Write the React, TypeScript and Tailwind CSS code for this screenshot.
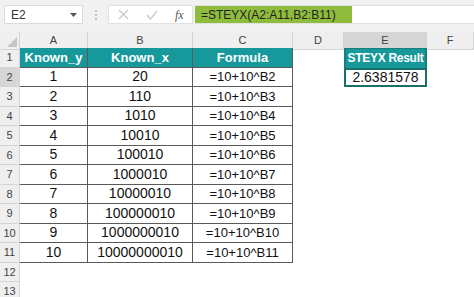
import React from 'react';

const rows = [
  ['1', '20', '=10+10^B2'],
  ['2', '110', '=10+10^B3'],
  ['3', '1010', '=10+10^B4'],
  ['4', '10010', '=10+10^B5'],
  ['5', '100010', '=10+10^B6'],
  ['6', '1000010', '=10+10^B7'],
  ['7', '10000010', '=10+10^B8'],
  ['8', '100000010', '=10+10^B9'],
  ['9', '1000000010', '=10+10^B10'],
  ['10', '10000000010', '=10+10^B11'],
];

const cols = ['A', 'B', 'C', 'D', 'E', 'F'];
const gridCols = 'grid grid-cols-[20px_68px_105px_100px_51px_83px_47px]';

const RowHead = ({ n, active }: { n: number; active?: boolean }) => (
  <div
    className={`flex items-center justify-center border-b border-r border-[#d4d4d4] text-[11px] text-[#444] ${
      active ? 'bg-[#d6d6d6]' : 'bg-[#efefef]'
    }`}
  >
    {n}
  </div>
);

export default function App() {
  return (
    <div className="w-[474px] h-[297px] overflow-hidden bg-white font-['Liberation_Sans',Arial,sans-serif] text-[#111]">
      {/* Formula bar */}
      <div className="h-[32px] bg-[#f1f1f1] flex items-start pt-[5px] pl-[4px]">
        <div className="w-[79px] h-[19px] bg-white border border-[#dadada] flex items-center justify-between pl-[6px] pr-[5px] text-[12px] text-[#333]">
          <span>E2</span>
          <svg width="7" height="4" viewBox="0 0 7 4"><path d="M0 0h7L3.5 4z" fill="#555" /></svg>
        </div>
        <div className="w-[25px] h-[19px] flex flex-col items-center justify-center gap-[2px]">
          <span className="w-[2px] h-[2px] bg-[#c4c4c4]" />
          <span className="w-[2px] h-[2px] bg-[#c4c4c4]" />
          <span className="w-[2px] h-[2px] bg-[#c4c4c4]" />
        </div>
        <div className="w-[85px] h-[19px] bg-white border border-[#e2e2e2] flex items-center pl-[9px] gap-[17px]">
          <svg width="11" height="11" viewBox="0 0 11 11"><path d="M1 1l9 9M10 1l-9 9" stroke="#c8c8c8" strokeWidth="1.2" /></svg>
          <svg width="12" height="10" viewBox="0 0 12 10"><path d="M1 5l3.5 4L11 1" stroke="#c8c8c8" strokeWidth="1.2" fill="none" /></svg>
          <span className="font-['Liberation_Serif',serif] italic text-[12px] text-[#555]">fx</span>
        </div>
        <div className="flex-1 h-[19px] ml-[2px] bg-white border-y border-[#e2e2e2] flex">
          <div className="w-[157px] h-full bg-[#8fbc3c] flex items-center pl-[6px] text-[12px] text-[#222]">
            =STEYX(A2:A11,B2:B11)
          </div>
        </div>
      </div>

      {/* Column headers */}
      <div className={`${gridCols} h-[16px]`}>
        <div className="bg-[#efefef] border-r border-b border-[#d4d4d4] relative">
          <svg className="absolute right-[2px] bottom-[2px]" width="10" height="10" viewBox="0 0 10 10">
            <path d="M10 0V10H0z" fill="#c6c6c6" />
          </svg>
        </div>
        {cols.map((c) => (
          <div
            key={c}
            className={`flex items-center justify-center border-r border-b border-[#d4d4d4] text-[11px] text-[#444] ${
              c === 'E' ? 'bg-[#d6d6d6]' : 'bg-[#efefef]'
            }`}
          >
            {c}
          </div>
        ))}
      </div>

      {/* Body */}
      <div className={`${gridCols} grid-rows-[repeat(13,19.5px)]`}>
        {/* Row 1 */}
        <RowHead n={1} />
        <div className="bg-[#17999b] text-white font-bold text-[13px] flex items-center justify-center border-r border-b border-[#5a5a5a]">Known_y</div>
        <div className="bg-[#17999b] text-white font-bold text-[13px] flex items-center justify-center border-r border-b border-[#5a5a5a]">Known_x</div>
        <div className="bg-[#17999b] text-white font-bold text-[13px] flex items-center justify-center border-r border-b border-[#5a5a5a]">Formula</div>
        <div />
        <div className="bg-[#17999b] text-white font-bold text-[12px] tracking-[-0.3px] whitespace-nowrap flex items-center justify-center border-l-2 border-r-2 border-t border-[#17807f]">STEYX Result</div>
        <div />

        {rows.map((r, i) => (
          <React.Fragment key={i}>
            <RowHead n={i + 2} active={i === 0} />
            {r.map((v, j) => (
              <div
                key={j}
                className={`flex items-center justify-center whitespace-nowrap border-r border-b border-[#5a5a5a] bg-white ${
                  j === 2 ? 'text-[13px]' : 'text-[14px]'
                }`}
              >
                {v}
              </div>
            ))}
            <div />
            {i === 0 ? (
              <div className="flex items-center justify-center text-[14px] border-2 border-[#1b6f6a] bg-white">2.6381578</div>
            ) : (
              <div />
            )}
            <div />
          </React.Fragment>
        ))}

        <RowHead n={12} />
        <div /><div /><div /><div /><div /><div />
        <RowHead n={13} />
        <div /><div /><div /><div /><div /><div />
      </div>
    </div>
  );
}
